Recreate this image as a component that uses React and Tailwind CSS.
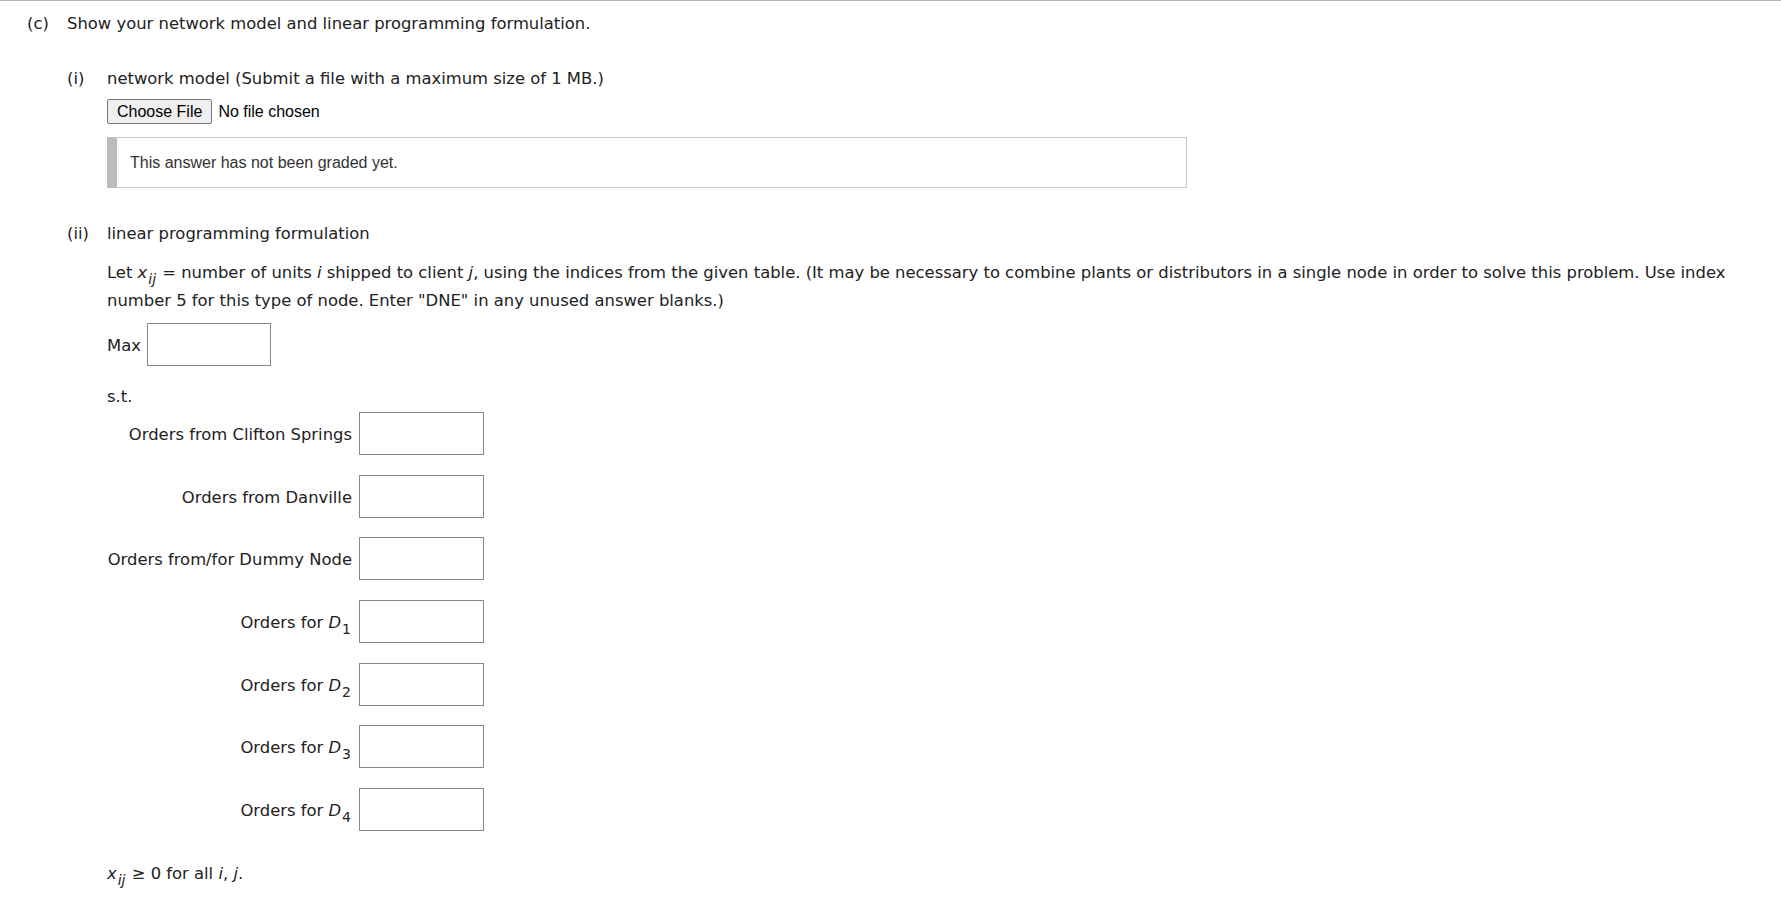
import React from "react";

const Sub = ({ children }) => (
  <span className="relative top-[6px] text-[14px] leading-none pl-[1px] pr-[1px]">{children}</span>
);

const constraints = [
  { key: "cs", label: <>Orders from Clifton Springs</> },
  { key: "dv", label: <>Orders from Danville</> },
  { key: "dn", label: <>Orders from/for Dummy Node</> },
  { key: "d1", label: <>Orders for <i>D</i><Sub>1</Sub></> },
  { key: "d2", label: <>Orders for <i>D</i><Sub>2</Sub></> },
  { key: "d3", label: <>Orders for <i>D</i><Sub>3</Sub></> },
  { key: "d4", label: <>Orders for <i>D</i><Sub>4</Sub></> },
];

const App = () => {
  return (
    <div className="min-h-screen bg-white border-t border-[#b4b4b4] font-['DejaVu_Sans',sans-serif] text-[16.4px] leading-[28px] text-[#222] pl-[27px] pr-[24px] pt-[9px]">
      {/* part (c) */}
      <div className="flex">
        <div className="w-[40px] shrink-0">(c)</div>
        <div className="flex-1">
          <p>Show your network model and linear programming formulation.</p>

          {/* (i) network model */}
          <div className="flex mt-[27px]">
            <div className="w-[40px] shrink-0">(i)</div>
            <div className="flex-1">
              <p>network model (Submit a file with a maximum size of 1 MB.)</p>
              <div className="flex items-center mt-[6px] font-['Liberation_Sans',Arial,sans-serif] text-[16px] text-black leading-[19px]">
                <button className="h-[25px] px-[9px] bg-[#efefef] border border-[#767676] rounded-[2px]">
                  Choose File
                </button>
                <span className="ml-[6px]">No file chosen</span>
              </div>
              <div className="mt-[13px] w-[1080px] border border-[#c8c8c8] border-l-[10px] border-l-[#bbbbbb] pl-[13px] py-[15px] font-['Liberation_Sans',Arial,sans-serif] text-[16px] leading-[19px] text-[#333]">
                This answer has not been graded yet.
              </div>
            </div>
          </div>

          {/* (ii) linear programming formulation */}
          <div className="flex mt-[32px]">
            <div className="w-[40px] shrink-0">(ii)</div>
            <div className="flex-1">
              <p>linear programming formulation</p>
              <p className="mt-[11px] max-w-[1650px]">
                Let <i>x</i><Sub><i>ij</i></Sub> = number of units <i>i</i> shipped to client <i>j</i>, using
                the indices from the given table. (It may be necessary to combine plants or distributors in a
                single node in order to solve this problem. Use index number 5 for this type of node. Enter
                "DNE" in any unused answer blanks.)
              </p>

              <div className="flex items-center mt-[8px]">
                <span className="pt-[3px]">Max</span>
                <input type="text" className="ml-[6px] w-[124px] h-[43px] border border-[#888] bg-white" />
              </div>

              <p className="mt-[17px]">s.t.</p>

              <div className="grid grid-cols-[245px_125px] gap-x-[7px] gap-y-[19.7px] items-center mt-[1px]">
                {constraints.map((c) => (
                  <React.Fragment key={c.key}>
                    <span className="text-right pt-[3px]">{c.label}</span>
                    <input type="text" className="w-[125px] h-[43px] border border-[#888] bg-white" />
                  </React.Fragment>
                ))}
              </div>

              <p className="mt-[29px]">
                <i>x</i><Sub><i>ij</i></Sub> ≥ 0 for all <i>i</i>, <i>j</i>.
              </p>
            </div>
          </div>
        </div>
      </div>
    </div>
  );
};

export default App;
